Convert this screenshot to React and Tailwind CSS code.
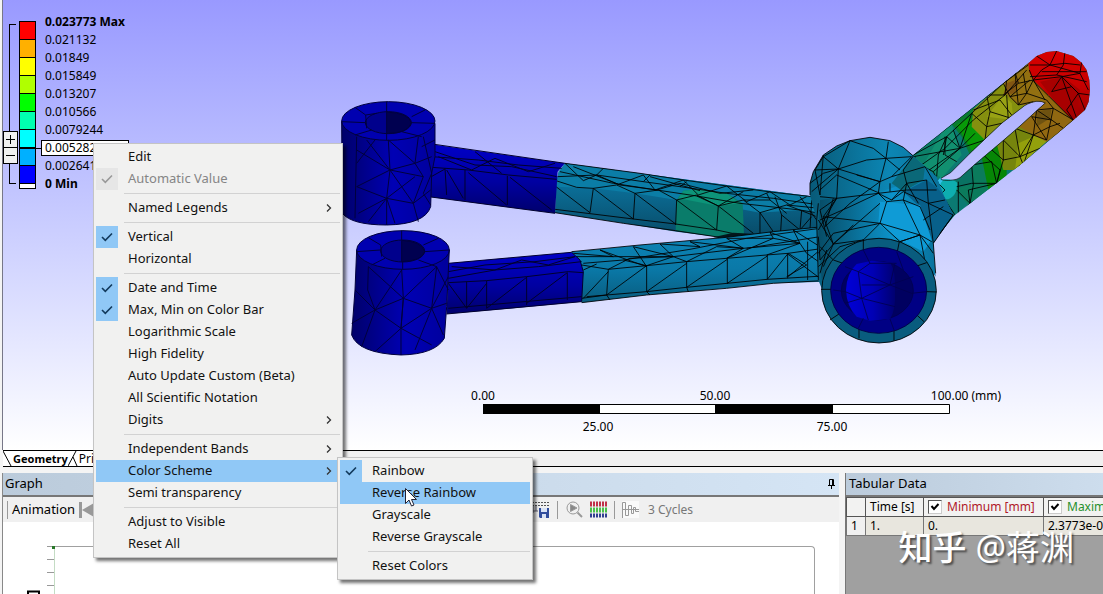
import { useState } from 'react'

const LEGEND = [
  { label: '0.023773 Max', color: 'bg-[#ff0000]', bold: true },
  { label: '0.021132', color: 'bg-[#ffb000]' },
  { label: '0.01849', color: 'bg-[#ffff00]' },
  { label: '0.015849', color: 'bg-[#b0ff00]' },
  { label: '0.013207', color: 'bg-[#00ff00]' },
  { label: '0.010566', color: 'bg-[#00ffb0]' },
  { label: '0.0079244', color: 'bg-[#00ffff]' },
  { label: '0.0052829', color: 'bg-[#00b0ff]', editable: true },
  { label: '0.0026414', color: 'bg-[#0000ff]' },
]

const MENU = [
  { label: 'Edit' },
  { label: 'Automatic Value', checked: true, disabled: true },
  null,
  { label: 'Named Legends', submenu: true },
  null,
  { label: 'Vertical', checked: true },
  { label: 'Horizontal' },
  null,
  { label: 'Date and Time', checked: true },
  { label: 'Max, Min on Color Bar', checked: true },
  { label: 'Logarithmic Scale' },
  { label: 'High Fidelity' },
  { label: 'Auto Update Custom (Beta)' },
  { label: 'All Scientific Notation' },
  { label: 'Digits', submenu: true },
  null,
  { label: 'Independent Bands', submenu: true },
  { label: 'Color Scheme', submenu: true, active: true },
  { label: 'Semi transparency' },
  null,
  { label: 'Adjust to Visible' },
  { label: 'Reset All' },
]

const COLOR_SCHEMES = [
  { label: 'Rainbow', checked: true },
  { label: 'Reverse Rainbow', active: true },
  { label: 'Grayscale' },
  { label: 'Reverse Grayscale' },
  null,
  { label: 'Reset Colors' },
]

const Legend = () => (
  <div className="relative flex items-start pt-[13px] text-xs leading-[18px]">
    <div className="relative mt-[11px] h-40 w-[14px]">
      <div className="ml-[6px] h-full w-[7px] border-y border-l border-black" />
      <div className="absolute top-[107px] left-0 flex flex-col">
        <button type="button" aria-label="Add band" className="flex h-[17px] w-[15px] items-center justify-center border border-black bg-[#f0f0f0]">
          <svg viewBox="0 0 9 9" className="size-[9px]"><path d="M0 4.5h9M4.5 0v9" stroke="#000" /></svg>
        </button>
        <button type="button" aria-label="Remove band" className="-mt-px flex h-[17px] w-[15px] items-center justify-center border border-black bg-[#f0f0f0]">
          <svg viewBox="0 0 9 9" className="size-[9px]"><path d="M0 4.5h9" stroke="#000" /></svg>
        </button>
      </div>
    </div>
    <div className="mt-2 ml-[2px] w-[17px] border border-black bg-white pb-1">
      {LEGEND.map((band) => (
        <div key={band.label} className={`h-[18px] border-b border-black ${band.color}`} />
      ))}
    </div>
    <div className="w-28">
      {LEGEND.map((band) =>
        band.editable ? (
          <div key={band.label} className="-ml-[17px] flex h-[18px] items-center">
            <div className="h-px w-[22px] bg-black" />
            <input aria-label="Band value" defaultValue={band.label} className="h-4 w-[88px] border border-black bg-white px-[3px] text-xs" />
          </div>
        ) : (
          <div key={band.label} className={`h-[18px] pl-[9px] ${band.bold ? 'font-bold' : ''}`}>{band.label}</div>
        )
      )}
      <div className="pl-[9px] font-bold">0 Min</div>
    </div>
  </div>
)

const Gradient = ({ id, from, mid, to, vertical }) => (
  <linearGradient id={id} x1="0" y1="0" x2={vertical ? '0' : '1'} y2={vertical ? '1' : '0'}>
    <stop offset="0" stopColor={from} />
    <stop offset=".55" stopColor={mid} />
    <stop offset="1" stopColor={to} />
  </linearGradient>
)

// Each group is drawn at three times the canvas scale
const Model = () => (
  <svg viewBox="3 0 1100 450" role="img" aria-label="Deformed mesh" className="absolute inset-0 h-full w-full">
    <defs>
      <Gradient id="cyl" from="#00006a" mid="#0000b4" to="#00009c" />
      <Gradient id="armBlue" from="#0000c8" mid="#0000a0" to="#00006c" vertical />
      <Gradient id="armTop" from="#0c7fae" mid="#0a6287" to="#084a66" vertical />
      <Gradient id="armLow" from="#0c86b8" mid="#0a79a8" to="#095c7e" vertical />
      <Gradient id="hubBack" from="#085a78" mid="#0c86b4" to="#0a6e96" />
      <Gradient id="hub" from="#074c66" mid="#0c93ca" to="#08658a" />
      <Gradient id="hole" from="#0000d8" mid="#0000b4" to="#000070" />
      <Gradient id="redCap" from="#dc0000" mid="#c80000" to="#960000" vertical />
      <clipPath id="slotArm">
        <path clipRule="evenodd" d="M0 405L70 345L415 70L440 48L470 36L500 33L550 48L575 68L590 90L598 120L600 150L596 185L585 210L550 240L390 375L195 525L135 598L60 600L0 560ZM153 415C148 421 170 422 182 421Q202 419 210 413L256 372L338 303L390 258L448 205L466 189Q455 182 438 184Q410 190 396 203L336 249L250 330L182 398Z" />
      </clipPath>
    </defs>

    {/* slotted arm */}
    <g transform="translate(890 40) scale(.3333)">
      <g clipPath="url(#slotArm)">
        <path d="M0 0H640V600H0Z" fill="#0b7a72" />
        <path d="M380 120L450 60L600 250L500 290Z" fill="#916811" />
        <path d="M0 350L70 345L120 400L145 430L190 525L140 600H0Z" fill="#08597b" />
        <path d="M60 345L130 290L215 340L140 420L80 390Z" fill="#0c8069" />
        <path d="M160 270L185 252L215 345L155 415L100 375Z" fill="#119070" />
        <path d="M185 252L250 205L295 300L240 345L215 290Z" fill="#0a7c30" />
        <path d="M200 255L240 230L265 275L300 300L250 340Z" fill="#089a08" />
        <path d="M250 208L345 125L420 190L400 215L290 305L245 260Z" fill="#85900f" />
        <path d="M290 230L340 165L365 190L370 240Z" fill="#98a214" />
        <path d="M340 125L415 60L430 120L475 180L440 195L385 195L355 170Z" fill="#927011" />
        <path d="M340 165L350 130L390 115L375 160Z" fill="#825512" />
        <path d="M245 370L300 325L335 430L240 500L195 450Z" fill="#0b7b5c" />
        <path d="M195 410L245 370L250 432L200 445Z" fill="#0a7263" />
        <path d="M275 350L325 305L350 350L350 410L295 450Z" fill="#068606" />
        <path d="M320 310L380 250L430 285L470 300L375 390L340 390Z" fill="#76850d" />
        <path d="M385 310L440 285L475 300L375 390Z" fill="#93a00c" />
        <path d="M380 255L465 180L560 240L470 305L430 285Z" fill="#916811" />
        <path d="M440 215L485 205L480 235L440 260Z" fill="#6e5210" />
        <path d="M415 70L418 95L430 120L475 165L550 242L640 220V0H415Z" fill="url(#redCap)" />
        <path d="M450 125L520 110L570 150L560 235L500 190Z" fill="#a80000" />
      </g>
      <path d="M140 425C145 450 148 470 165 478C185 480 203 460 202 428C190 416 155 414 140 425Z" fill="#0eaeb0" />
      <path d="M155 417C145 425 140 445 148 462" fill="none" stroke="#35bfe8" strokeWidth="12" />
      <path clipPath="url(#slotArm)" fill="none" stroke="#000" strokeWidth="2.600" d="M0 405L70 345L415 70M60 600L135 595L550 240M70 345L170 290L245 220L340 130L415 75M70 350L210 325M360 170L420 120M80 385L165 325L250 240L345 165L410 90M75 420L210 325L255 280M100 380L130 395L210 325M130 395L145 430M245 220L210 325L170 290L160 345M245 220L290 260L300 215L290 165L345 165L350 120M290 260L380 240L300 215M290 260L285 300L210 325M250 210L330 180L365 225M340 130L360 170L385 195L410 160L430 120L465 180M375 95L385 130L340 165M385 130L430 120M385 195L375 100M410 160L470 180M360 170L410 160L400 100M350 165L355 240M385 195L430 185M205 425L205 525L240 490L310 450L390 375M200 440L245 430L320 430L305 365L245 375L250 435L240 490L200 450M245 375L300 325L340 360L390 350L375 265L340 300L340 360L320 430M340 300L390 350L430 285L375 265M390 350L400 375L430 285L440 210L485 240L425 230L470 300L430 285M470 300L490 205L440 210M490 205L470 180M490 205L550 240M485 240L520 265M240 490L235 450L320 430L330 390L280 345M430 285L480 260L510 250M390 350L450 325M310 450L320 430M165 290L165 345L200 365M170 290L145 345L140 410M190 270L210 325M430 120L455 90L480 75L525 70L570 75M420 75L480 75L440 48M480 75L500 33M420 110L500 105L520 75L525 35M500 105L590 125M485 155L515 110L570 100L595 150M430 120L515 110L565 160L600 165M485 155L545 140L565 160L530 210L550 240M515 110L560 235M565 160L585 210M480 75L570 100L575 65M455 95L590 95M418 90L432 125L475 167L548 240M0 500L120 495L185 510M30 430L60 465L120 495L165 450L145 430L60 465L0 500M0 450L45 455L85 390L60 370M20 420L75 350L70 430M120 495L130 590L155 550L165 480L195 525M30 430L90 585L130 590M60 465L85 590M0 480L90 585" />
      <path d="M153 415C148 421 170 422 182 421Q202 419 210 413L256 372L338 303L390 258L448 205L466 189Q455 182 438 184Q410 190 396 203L336 249L250 330L182 398Z" fill="none" stroke="#111" strokeWidth="2" />
    </g>

    {/* upper arm */}
    <g transform="translate(540 150) scale(.3333)">
      <path d="M75 40L835 142L850 250L540 262L410 245L250 220L45 188L48 90Z" fill="url(#armTop)" />
      <path d="M75 40L835 142L850 195L785 180L660 188L535 165L410 150L285 130L160 115L48 110L55 65Z" fill="#0b7da6" />
      <path d="M410 150L430 122L475 118L560 130L608 160L612 252L540 262L407 242Z" fill="#0a7c6a" />
      <path d="M415 145L430 122L475 118L560 130L600 160L535 168Z" fill="#0d9479" />
      <path fill="none" stroke="#000" strokeWidth="2.600" d="M75 40L300 70L430 90L560 108L700 127L835 142M45 188L250 220L407 242L540 262M52 80L170 75L310 95L420 110L560 130L700 145L840 165M60 65L220 100L350 120L470 138L600 160L780 180L840 190M48 92L110 112L160 115L230 105L285 130L355 120L410 150L470 135L535 168L610 150L660 188L740 165L785 182L830 200M75 40L130 92L170 75L190 55M170 75L235 103L310 75L345 120L430 90L475 135L560 108L620 155L690 125L750 165L800 140M310 95L330 75M420 110L440 95M160 115L150 188M285 130L280 207M410 150L407 225M535 168L530 240M660 188L660 250M725 195L722 245M785 182L780 240M815 150L810 240M48 110L150 188M160 115L280 207M285 130L407 222M410 150L530 240M535 168L640 250M660 188L700 245M725 195L780 240L815 200M45 178L280 207L407 222L530 240L600 255M240 105L350 120L420 100L540 130L640 120M100 50L240 105M330 80L480 122M470 138L535 168L610 125M610 150L690 150L740 190M690 150L680 130M780 140L830 210M740 165L840 175M705 140L725 195" />
      <path d="M520 262L580 248L650 252L560 268Z" fill="#03161c" />
    </g>
    <g transform="translate(335 90) scale(.3333)">
      <path d="M290 163L690 220L668 245L660 370L280 320L280 190Z" fill="url(#armBlue)" />
      <path fill="none" stroke="#00002c" strokeWidth="3" d="M298 163L690 220M280 320L660 370M290 200L430 210L550 225L680 235M290 232L400 240L520 255L665 268M300 185L420 225L530 230L665 260M330 235L335 315M390 240V330M517 258V345M310 200L410 240L480 205L580 245L660 220M400 248L515 345M525 262L650 360M335 240L385 325M280 265L330 237M420 185L500 250" />
    </g>

    {/* lower arm */}
    <g transform="translate(540 150) scale(.3333)">
      <path d="M95 305L300 285L560 262L700 245L850 230L855 395L700 400L560 415L320 435L125 458Z" fill="url(#armLow)" />
      <path fill="none" stroke="#000" strokeWidth="2.600" d="M95 305L300 285L560 262L700 245L850 230M125 458L320 435L560 415L700 400L850 392M105 320L220 320L400 320L610 295L780 280M130 340L250 330L450 298L620 265L840 235M125 345L205 358L320 347L440 335L560 325L680 315L745 310L850 295M250 330L320 347L400 320L440 335L530 290L610 295L560 325L700 265L780 280L680 315M205 358L270 325L400 320M205 358L200 435M320 347V425M440 335V412M562 325V402M682 315V388M743 310V385M803 275V390M130 360L170 342M125 445L200 435L320 425L440 412L562 400L682 388L850 378M130 445L205 365M200 435L320 347M320 425L440 340M440 412L562 328M562 400L682 318M682 388L743 312L840 385M745 380L840 300M100 310L220 320L180 300L320 350L280 290L400 320L360 282L480 290L450 275L610 295L560 265L700 265L690 247L780 280L760 240L840 290M620 295L840 260M140 440L200 435L210 450M320 425L330 435M440 412L445 425M780 280L800 310L850 345M745 310L800 345L740 380" />
    </g>
    <g transform="translate(335 90) scale(.3333)">
      <path d="M340 520L710 487L735 510L745 545L740 635L500 658L335 672Z" fill="url(#armBlue)" />
      <path fill="none" stroke="#00002c" strokeWidth="3" d="M340 520L710 487L735 510L745 545L740 635L335 672M340 545L450 525L600 515L720 500M340 565L480 540L610 530L740 515M340 578L455 572L575 560L700 545L745 548M350 530L480 540L560 510L640 525L720 500M455 572V655M575 560V645M697 548V630M340 580L395 655L455 580M395 575V655M455 655L575 562M575 640L697 548M340 655L740 620" />
    </g>

    {/* left cylinders */}
    <g transform="translate(335 90) scale(.3333)" stroke="#00003c" strokeWidth="3">
      <path d="M20 95L22 370Q50 405 155 405Q270 403 287 350L290 250L300 200V100Z" fill="url(#cyl)" />
      <ellipse cx="160" cy="93" rx="140" ry="58" fill="#0000b0" />
      <ellipse cx="160" cy="98" rx="69" ry="33" fill="#00008c" />
      <path d="M155 66L155 130Q220 130 229 98Q222 70 155 66Z" fill="#000050" />
      <path fill="none" d="M155 35V66M20 95L92 98M92 75L60 52M92 75L125 70M229 98L300 100M230 80L270 60M110 120L60 135M200 125L260 140M155 130V150M92 75L95 115M65 140L60 385M160 150L165 240L155 325V405M250 140L240 220L265 260L235 340M160 150L240 220L165 240L65 290M165 240L235 340L155 325L70 370M65 180L165 240L265 260M155 325L240 260M65 290L155 325L180 400M120 150L65 220M235 340L287 300M235 340L250 395M155 325L100 395M95 150L165 240M265 140L290 250L265 310L287 345M260 170L300 150M240 220L290 200" />
      <path d="M65 480L60 600L50 735Q70 790 198 795Q300 793 328 745L335 650L343 480Z" fill="url(#cyl)" />
      <ellipse cx="204" cy="480" rx="139" ry="58" fill="#0000b0" />
      <ellipse cx="203" cy="483" rx="66" ry="33" fill="#00008c" />
      <path d="M200 451V515Q262 512 269 485Q262 455 200 451Z" fill="#000050" />
      <path fill="none" d="M200 422V450M65 485L137 480M137 465L100 443M269 485L343 480M265 465L310 445M150 505L110 525M250 510L305 530M203 515V537M137 465L140 500M100 530L98 600L120 660L80 770M200 538L205 625L198 715V795M305 530L290 655L325 735M100 530L205 625L120 660L60 600M305 530L205 625L290 655L198 715L120 660L50 700M290 655L340 560M290 655L240 780M198 715L290 765M198 715L120 785M200 540L120 660M305 530L340 600M205 625L198 715M290 655L335 640" />
    </g>

    {/* hub */}
    <g transform="translate(790 120) scale(.3333)" stroke="#000" strokeWidth="2.600">
      <path d="M60 225L60 190L70 155L100 105L140 78L180 62L240 52L300 62L340 82L370 108L440 170L465 235L490 285L430 370L435 460L400 560H120L93 500L85 480L80 300Z" fill="url(#hubBack)" stroke="none" />
      <path d="M90 240L270 215L350 190L410 180Q450 205 465 235L490 285L430 370L437 470L380 380L260 355L140 410L95 480L85 350Z" fill="url(#hub)" stroke="none" />
      <path d="M305 190L370 108L405 140L400 180L340 215Z" fill="#0a6878" stroke="none" />
      <path d="M340 215L410 180Q450 205 465 235L490 285L430 370L390 260Z" fill="#08608a" stroke="none" />
      <path d="M270 245L390 255L425 360L400 395L330 360L265 312Z" fill="#0f9bd6" stroke="none" />
      <path fill="none" d="M60 225L60 190L70 155L100 105L140 78L180 62L240 52L300 62L340 82L370 108M490 285L430 370L437 460M85 250L80 300L85 480M180 62L250 85L288 115L295 65M180 62L145 147L230 120L288 115L365 110M100 110L145 147L75 150L100 110L180 62M145 147L140 235M145 147L270 185L200 165M288 115L270 185L305 170L365 110M60 190L100 160L145 147L65 215M100 105L90 225M75 150L90 225M288 115L330 150M270 185L265 220L305 240L350 190L340 150L370 108M265 220L140 235L100 290L270 310L290 245L265 220L180 260L90 300M290 245L340 240L390 260L420 330M340 240L350 190L410 180L415 250L340 215L305 240M415 250L490 285L450 340M415 250L430 370M415 250L465 240M270 310L330 365L390 345L425 365M270 310L390 345L340 240M270 310L220 360L130 372L190 315M130 372L270 250M130 372L85 300M130 372L90 420L85 350M100 290L130 372L100 440M270 310L130 340L85 400M390 345L405 425M330 365L390 345L430 400M265 220L350 210L440 210M300 190L300 215M305 170L405 140L440 200M90 230L140 235L90 270L110 350M130 235L105 320L180 250L270 185M140 235L85 330M90 210L140 165L270 220M90 380L130 420M85 440L150 380L220 360M110 390L90 460M385 250L350 190M400 300L460 260" />
      <ellipse cx="267" cy="512" rx="172" ry="157" fill="#095c7e" />
      <path fill="none" d="M220 358V390M328 365L322 395M130 420L165 432M93 508H125M120 600L150 580M207 655V625M312 662V630M402 605L375 580M440 516L410 515M410 428L375 440" />
      <ellipse cx="266" cy="511" rx="144" ry="129" fill="#000084" stroke="#000040" />
      <ellipse cx="262" cy="512" rx="108" ry="88" fill="#000060" stroke="#000050" />
      <path d="M200 432L245 422L300 427Q318 455 315 512Q318 570 300 597L240 602L200 590Q170 560 168 510Q170 460 200 432Z" fill="url(#hole)" stroke="none" />
      <path fill="none" stroke="#000050" d="M220 390L240 430L205 455L165 440M205 455L215 535L300 495L205 455M240 430L320 430M215 535L235 600M215 535L315 560M300 495L370 470M215 535L165 550M300 495L315 430M300 495L365 520L410 515M130 510L165 515L215 535M320 395L340 450M205 625L220 595M312 630L300 597M215 495L300 495" />
    </g>

    {/* scale ruler */}
    <path d="M483.500 404.500H949.500V413.500H483.500Z" fill="#fff" stroke="#000" />
    <path d="M483 404H600V414H483ZM715 404H833V414H715Z" />
    <g fontSize="12" textAnchor="middle">
      <text x="483" y="400">0.00</text>
      <text x="598" y="431">25.00</text>
      <text x="715" y="400">50.00</text>
      <text x="832" y="431">75.00</text>
      <text x="966" y="400">100.00 (mm)</text>
    </g>
  </svg>
)

const Check = () => (
  <svg viewBox="0 0 12 10" className="h-[10px] w-3" fill="none" stroke="currentColor" strokeWidth="1.600">
    <path d="M1 5l3.300 3.300L11 1.500" />
  </svg>
)

const MenuItem = ({ item, onHover }) => (
  <button
    type="button"
    role="menuitem"
    disabled={item.disabled}
    onMouseEnter={onHover}
    className={`flex h-[22px] w-full items-center text-left ${item.active ? 'bg-[#90c8f6]' : ''} ${item.disabled ? 'text-[#858585]' : 'text-[#111]'}`}
  >
    <span className={`flex size-[22px] items-center justify-center ${item.checked ? (item.disabled ? 'bg-[#e6e6e6] text-[#999]' : 'bg-[#90c8f6] text-[#123a5c]') : ''}`}>
      {item.checked && <Check />}
    </span>
    <span className="flex-1 pl-[10px] whitespace-nowrap">{item.label}</span>
    {item.submenu && (
      <svg viewBox="0 0 6 8" className="mr-2 h-2 w-[6px]" fill="none" stroke="#333" strokeWidth="1.300"><path d="M1 .5L4.500 4L1 7.500" /></svg>
    )}
  </button>
)

const Menu = ({ items, label, className }) => {
  const [hovered, setHovered] = useState(null)
  return (
    <div role="menu" aria-label={label} className={`absolute border border-[#c4c4c4] bg-[#f1f1f0] p-[2px] text-[13px] shadow-[3px_3px_3px_rgba(0,0,0,0.55)] ${className}`}>
      {items.map((item, i) =>
        item ? (
          <MenuItem key={item.label} item={hovered === null ? item : { ...item, active: hovered === i }} onHover={() => setHovered(i)} />
        ) : (
          <div key={i} role="separator" className="flex h-[7px] items-center pl-7">
            <div className="h-px w-full bg-[#d2d2d2]" />
          </div>
        )
      )}
    </div>
  )
}

const ViewTabs = () => (
  <div className="ml-[3px] flex h-[17px] border-y border-black bg-[#f0f0f0] leading-[15px]">
    <button type="button" className="flex bg-white text-[11px] font-bold">
      <svg viewBox="0 0 9 15" className="mr-px h-[15px] w-[9px]"><path d="M0 0L8 15" stroke="#000" /></svg>
      Geometry
      <svg viewBox="0 0 10 15" className="h-[15px] w-[10px]" fill="none" stroke="#000"><path d="M0 15L8 0M5 6l4 9" /></svg>
    </button>
    <button type="button" className="bg-white px-px text-xs">Print Preview</button>
  </div>
)

const Pin = () => (
  <svg viewBox="0 0 7 10" className="h-[10px] w-[7px]" fill="none" stroke="#000"><path d="M1.500 6V.5H5.500V6M0 6.500H7M3.500 6V10M4.500 1V6" /></svg>
)

const Divider = () => <div className="h-[18px] w-px bg-[#999]" />

const GraphPanel = () => (
  <section className="ml-[2px] flex min-w-0 flex-1 flex-col border-l border-[#888] bg-white">
    <header className="flex h-6 items-center justify-between border-b-2 border-[#777] bg-linear-to-r from-[#bbcbdb] to-[#d5e5f5] pr-1 pl-[2px] text-[13px]">
      <h2>Graph</h2>
      <button type="button" aria-label="Pin panel"><Pin /></button>
    </header>
    <div className="flex h-[25px] items-center bg-[#f0f0f0] pl-1 text-[13px]">
      <Divider />
      <span className="w-[71px] pl-1">Animation</span>
      <button type="button" aria-label="First frame">
        <svg viewBox="0 0 15 16" className="h-4 w-[15px]" fill="#999"><path d="M0 0H3V16H0ZM3 8L15 1V15Z" /></svg>
      </button>
      <button type="button" aria-label="Export video" className="ml-[438px]">
        <svg viewBox="0 0 18 18" className="size-[18px]">
          <path d="M0 1.500H17M0 4.500H17" stroke="#555" strokeDasharray="2 1" />
          <path d="M1 5V12M4 10V5M1 10H6" stroke="#667" fill="none" />
          <path d="M7 7H17V17H8L7 16Z" fill="#304c9c" />
          <path d="M9 7H15V11H9ZM10 13H14V17H10Z" fill="#d8e2f4" />
        </svg>
      </button>
      <div className="px-[7px]"><Divider /></div>
      <button type="button" aria-label="Zoom to result" className="px-[1px]">
        <svg viewBox="0 0 17 17" className="size-[17px]" fill="none" stroke="#999">
          <circle cx="7" cy="7" r="6" /><path d="M4.500 3.500V10.500L11 7Z" fill="#888" /><path d="M11.500 11.500L16 16" strokeWidth="2" />
        </svg>
      </button>
      <button type="button" aria-label="Color bands" className="ml-[6px]">
        <svg viewBox="0 0 17 17" className="size-[17px]" fill="none" strokeWidth="5" strokeDasharray="2 1">
          <path d="M0 3H17" stroke="#c03048" /><path d="M0 9H17" stroke="#48c048" /><path d="M0 14.500H17" stroke="#304090" strokeWidth="4" />
        </svg>
      </button>
      <div className="px-[7px]"><Divider /></div>
      <svg viewBox="0 0 17 17" className="size-[17px] bg-[#fafafa]" fill="none" stroke="#999"><path d="M.5 17V1.500H3.500V14.500H6.500V4.500H9.500V12.500H11.500V6.500H13.500V10.500H17M0 8.500H17" /></svg>
      <span className="pl-[9px] text-xs text-[#777]">3 Cycles</span>
    </div>
    <div className="flex flex-1 pt-6 pr-6 pl-6">
      <svg viewBox="0 0 28 48" className="h-12 w-7 shrink-0" fill="none">
        <path d="M20 .5H27M20 13.500H27M20 26.500H27M20 39.500H27" stroke="#999" />
        <path d="M27.500 0V48" stroke="#c4dcc4" />
        <path d="M1 48V45.500H12V48" stroke="#000" strokeWidth="2" />
        <path d="M25 0H28V3H25Z" fill="#287828" />
      </svg>
      <div className="flex-1 rounded-tr-sm border-t border-r border-[#a0a0a0]" />
    </div>
  </section>
)

const CheckBox = ({ id }) => (
  <span className="relative flex size-[14px]">
    <input id={id} type="checkbox" defaultChecked className="peer size-[14px] appearance-none border border-[#555] border-r-[#ccc] border-b-[#ccc] bg-white" />
    <svg viewBox="0 0 14 14" className="pointer-events-none invisible absolute inset-0 peer-checked:visible" fill="none" stroke="#000" strokeWidth="2"><path d="M3.500 6L6 9L10.500 4" /></svg>
  </span>
)

const TabularPanel = () => (
  <section className="ml-[6px] w-[258px] shrink-0 overflow-hidden border-l border-[#777] bg-[#a0a0a0]">
    <header className="flex h-6 items-center border-b-2 border-[#777] bg-linear-to-r from-[#bbcbdb] to-[#cddded] pl-[3px] text-[13px]">
      <h2>Tabular Data</h2>
    </header>
    <table className="w-[318px] table-fixed border-collapse text-xs leading-[18px] [&_td]:border [&_td]:border-[#777] [&_th]:border [&_th]:border-[#555]">
      <thead>
        <tr className="h-[19px] bg-[#f2f2f1] text-left [&>th]:p-0 [&>th]:font-normal">
          <th className="w-[19px]" />
          <th className="w-[58px]"><span className="pl-1">Time [s]</span></th>
          <th className="w-[120px]">
            <label htmlFor="min" className="flex items-center gap-[5px] pl-1 whitespace-nowrap text-[#b01828]"><CheckBox id="min" />Minimum [mm]</label>
          </th>
          <th>
            <label htmlFor="max" className="flex items-center gap-[5px] pl-1 whitespace-nowrap text-[#28902c]"><CheckBox id="max" />Maximum [mm]</label>
          </th>
        </tr>
      </thead>
      <tbody>
        <tr className="h-[19px] bg-[#e8e6de] [&>td]:p-0 [&>td]:pl-1">
          <td className="bg-[#f0f0f0]">1</td>
          <td>1.</td>
          <td>0.</td>
          <td>2.3773e-002</td>
        </tr>
      </tbody>
    </table>
  </section>
)

export default function App() {
  return (
    <div className="relative flex min-h-screen flex-col overflow-hidden bg-[#f4f4f4] font-['Noto_Sans','Noto_Sans_CJK_SC',sans-serif] text-black">
      <main className="relative ml-[2px] flex-1 border-l border-[#778] bg-linear-to-b from-[#9999ff] to-white">
        <Model />
        <Legend />
      </main>
      <ViewTabs />
      <div className="flex h-[127px] pt-[6px]">
        <GraphPanel />
        <TabularPanel />
      </div>

      <Menu items={MENU} label="Legend options" className="top-[143px] left-[93px] w-[250px]" />
      <Menu items={COLOR_SCHEMES} label="Color scheme" className="top-[457px] left-[337px] w-[196px]" />
      <svg viewBox="0 0 12 19" className="pointer-events-none absolute top-[488px] left-[405px] h-[19px] w-3">
        <path d="M.5 .5V15.500L4 12L6.500 18L9 17L6.500 11.500H11.500Z" fill="#fff" stroke="#223" />
      </svg>
      <div className="pointer-events-none absolute right-[29px] bottom-6 text-[34px] leading-[46px] whitespace-nowrap text-white [text-shadow:2px_2px_2px_rgba(0,0,0,0.5)]">
        <span className="font-medium">知乎</span> @蒋渊
      </div>
    </div>
  )
}
